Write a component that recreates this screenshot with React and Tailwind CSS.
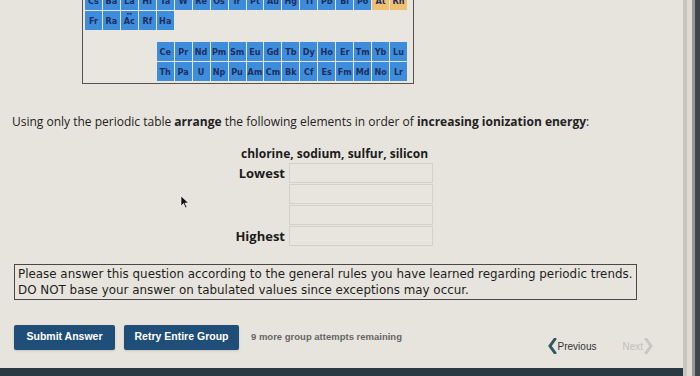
import React from 'react';

const row6 = ['Cs', 'Ba', 'La', 'Hf', 'Ta', 'W', 'Re', 'Os', 'Ir', 'Pt', 'Au', 'Hg', 'Tl', 'Pb', 'Bi', 'Po', 'At', 'Rn'];
const row7 = ['Fr', 'Ra', 'Ac', 'Rf', 'Ha'];
const lanth = ['Ce', 'Pr', 'Nd', 'Pm', 'Sm', 'Eu', 'Gd', 'Tb', 'Dy', 'Ho', 'Er', 'Tm', 'Yb', 'Lu'];
const actin = ['Th', 'Pa', 'U', 'Np', 'Pu', 'Am', 'Cm', 'Bk', 'Cf', 'Es', 'Fm', 'Md', 'No', 'Lr'];

function Cell({ sym }) {
  const halogen = sym === 'At' || sym === 'Rn';
  return (
    <div
      className={`relative h-[19px] flex items-center justify-center text-[9px] font-bold leading-none text-[#1d2e60] ${
        halogen ? 'bg-[#efbf72]' : 'bg-[#3e8ddc]'
      }`}
      style={{ fontFamily: '"DejaVu Sans Condensed", "DejaVu Sans", sans-serif' }}
    >
      {sym === 'Ac' && <span className="absolute top-[1px] text-[6px] leading-none">**</span>}
      <span className="mt-[1px]">{sym}</span>
    </div>
  );
}

function PeriodicTable() {
  return (
    <div className="ml-[82px] w-[332px] mt-[-9px] border-x border-b border-[#55534f] pl-[2px] pr-[6px] pb-[2px] bg-[#e9e6df]">
      <div className="grid grid-cols-[repeat(18,1fr)] gap-x-px">
        {row6.map((s) => <Cell key={s} sym={s} />)}
      </div>
      <div className="grid grid-cols-[repeat(18,1fr)] gap-x-px mt-[1px]">
        {row7.map((s) => <Cell key={s} sym={s} />)}
      </div>
      <div className="grid grid-cols-[repeat(18,1fr)] gap-x-px gap-y-px mt-[12px]">
        <div className="col-span-4" />
        {lanth.map((s) => <Cell key={s} sym={s} />)}
        <div className="col-span-4" />
        {actin.map((s) => <Cell key={s} sym={s} />)}
      </div>
    </div>
  );
}

function Slot() {
  return <div className="h-[20px] w-[144px] border border-[#d4d1ca] bg-[#e8e5de]" />;
}

function Ordering() {
  const label = 'w-[55px] text-right pr-[4px] text-[13px] font-bold text-[#1c1c1c] leading-none';
  return (
    <div className="ml-[234px] mt-[17px]" style={{ fontFamily: '"Open Sans", sans-serif' }}>
      <div className="ml-[7px] text-[12px] font-bold text-[#1c1c1c] leading-none">
        chlorine, sodium, sulfur, silicon
      </div>
      <div className="mt-[3px] flex flex-col gap-[1px]">
        <div className="flex items-center">
          <div className={label}>Lowest</div>
          <Slot />
        </div>
        <div className="flex items-center">
          <div className="w-[55px]" />
          <Slot />
        </div>
        <div className="flex items-center">
          <div className="w-[55px]" />
          <Slot />
        </div>
        <div className="flex items-center">
          <div className={label}>Highest</div>
          <Slot />
        </div>
      </div>
    </div>
  );
}

export default function App() {
  return (
    <div className="w-[700px] h-[376px] overflow-hidden flex bg-[#e7e4dd]">
      <div className="relative w-[683px] flex flex-col">
        <div className="flex-1 flex flex-col">
          <PeriodicTable />

          <p
            className="ml-[12px] mt-[29px] text-[12px] leading-[18px] text-[#222]"
            style={{ fontFamily: '"Open Sans", sans-serif' }}
          >
            Using only the periodic table <b>arrange</b> the following elements in order of{' '}
            <b>increasing ionization energy</b>:
          </p>

          <Ordering />

          <div
            className="ml-[14px] mt-[18px] w-[623px] border border-[#4a4844] px-[3px] py-[1px] text-[11.9px] leading-[16px] text-[#1e1e1e]"
            style={{ fontFamily: '"DejaVu Sans", sans-serif' }}
          >
            <div>Please answer this question according to the general rules you have learned regarding periodic trends.</div>
            <div>DO NOT base your answer on tabulated values since exceptions may occur.</div>
          </div>

          <div className="ml-[14px] mt-[20px] flex items-center" style={{ fontFamily: '"Liberation Sans", sans-serif' }}>
            <button className="w-[101px] h-[25px] rounded-[2px] bg-[#1f4e78] text-white text-[10.5px] font-bold shadow-sm">
              Submit Answer
            </button>
            <button className="ml-[9px] w-[115px] h-[25px] rounded-[2px] bg-[#1f4e78] text-white text-[10.5px] font-bold shadow-sm">
              Retry Entire Group
            </button>
            <span className="ml-[12px] text-[9.5px] font-bold text-[#666]">9 more group attempts remaining</span>
            <div className="ml-auto mr-[30px] mt-[18px] flex items-center gap-[26px] text-[10px]">
              <span className="flex items-center text-[#333]">
                <svg width="9" height="16" viewBox="0 0 9 16" className="mr-[1px]">
                  <path d="M7 1 L2 8 L7 15" fill="none" stroke="#2c5866" strokeWidth="3" strokeLinecap="round" />
                </svg>
                Previous
              </span>
              <span className="flex items-center text-[#c2c0bb]">
                Next
                <svg width="9" height="16" viewBox="0 0 9 16" className="ml-[1px]">
                  <path d="M2 1 L7 8 L2 15" fill="none" stroke="#c8c6c1" strokeWidth="3" strokeLinecap="round" />
                </svg>
              </span>
            </div>
          </div>
        </div>
        <div className="h-[8px] bg-[#2b3942] mt-auto" />

        <svg className="absolute left-[180px] top-[195px]" width="10" height="14" viewBox="0 0 10 14">
          <path d="M1 1 L1 11 L3.5 8.5 L5.5 13 L7 12.3 L5 8 L8.5 8 Z" fill="#111" stroke="#fff" strokeWidth="0.6" />
        </svg>
      </div>
      <div className="flex w-[17px]">
        <div className="w-[4px] bg-[#c8c5be]" />
        <div className="w-[5px] bg-[#dedbd4]" />
        <div className="w-[3px] bg-[#9a9893]" />
        <div className="flex-1 bg-[#3c464c]" />
      </div>
    </div>
  );
}
